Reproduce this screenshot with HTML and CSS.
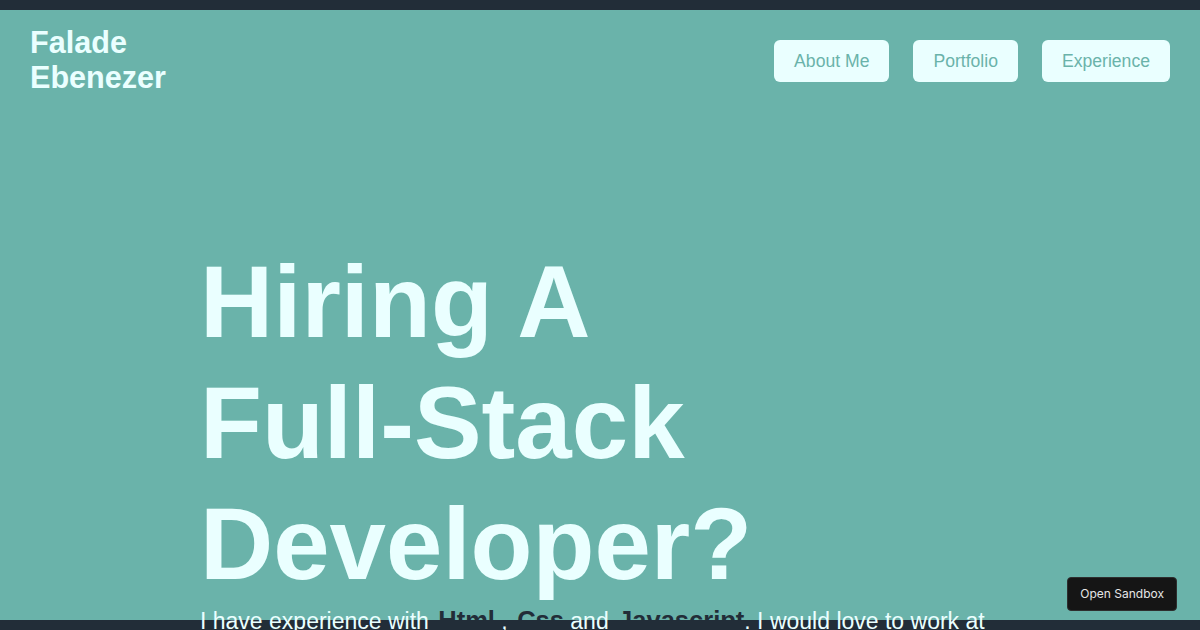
FILE: index.html
```html
<!DOCTYPE html>
<html lang="en">
<head>
<meta charset="utf-8">
<title>Falade Ebenezer</title>
<link rel="stylesheet" href="styles.css">
</head>
<body>
<div class="page">
  <header class="header">
    <div class="brand">Falade<br>Ebenezer</div>
    <nav class="nav">
      <a class="nav-btn" href="#">About Me</a>
      <a class="nav-btn" href="#">Portfolio</a>
      <a class="nav-btn" href="#">Experience</a>
    </nav>
  </header>
  <section class="hero">
    <h1 class="hero-title">Hiring A Full-Stack Developer?</h1>
    <p class="hero-text">I have experience with <b class="skill">Html</b> , <b class="skill">Css</b> and <b class="skill">Javascript</b>. I would love to work at your company and contribute to your team.</p>
  </section>
</div>
<a class="sandbox-btn" href="#">Open Sandbox</a>
</body>
</html>
```

FILE: styles.css
```css
html {
  background: #222d38;
  height: 100%;
}
body {
  margin: 0;
  height: 100%;
  font-family: "Liberation Sans", Arial, sans-serif;
  color: #eaffff;
  overflow: hidden;
}
.page {
  background: #6ab3aa;
  margin-top: 10px;
  height: 610px;
}
.header {
  display: flex;
  justify-content: space-between;
  align-items: center;
  padding: 15px 30px;
}
.brand {
  font-size: 30.6px;
  font-weight: bold;
  line-height: 34.5px;
  color: #eaffff;
}
.nav {
  display: flex;
  gap: 24px;
  margin-top: 3px;
}
.nav-btn {
  display: block;
  background: #eaffff;
  color: #6ab3aa;
  text-decoration: none;
  font-size: 17.6px;
  line-height: 20px;
  padding: 11px 20px;
  border-radius: 6px;
}
.hero {
  width: 800px;
  margin: 0 auto;
  padding-top: 132px;
}
.hero-title {
  margin: 0;
  font-size: 101.4px;
  line-height: 121px;
  font-weight: bold;
  color: #eaffff;
  width: 600px;
}
.hero-text {
  margin: 0;
  padding-top: 2px;
  font-size: 23px;
  line-height: 28px;
  color: #eaffff;
}
.skill {
  font-size: 1.11em;
  color: #222d38;
  margin-left: 3px;
}
.sandbox-btn {
  position: fixed;
  right: 23px;
  bottom: 19px;
  background: #151515;
  color: #e6e6e6;
  font-family: Inter, "Liberation Sans", sans-serif;
  font-size: 12px;
  text-decoration: none;
  padding: 8px 12px;
  border: 1px solid #2e2e2e;
  border-radius: 4px;
  line-height: 16px;
}
```
